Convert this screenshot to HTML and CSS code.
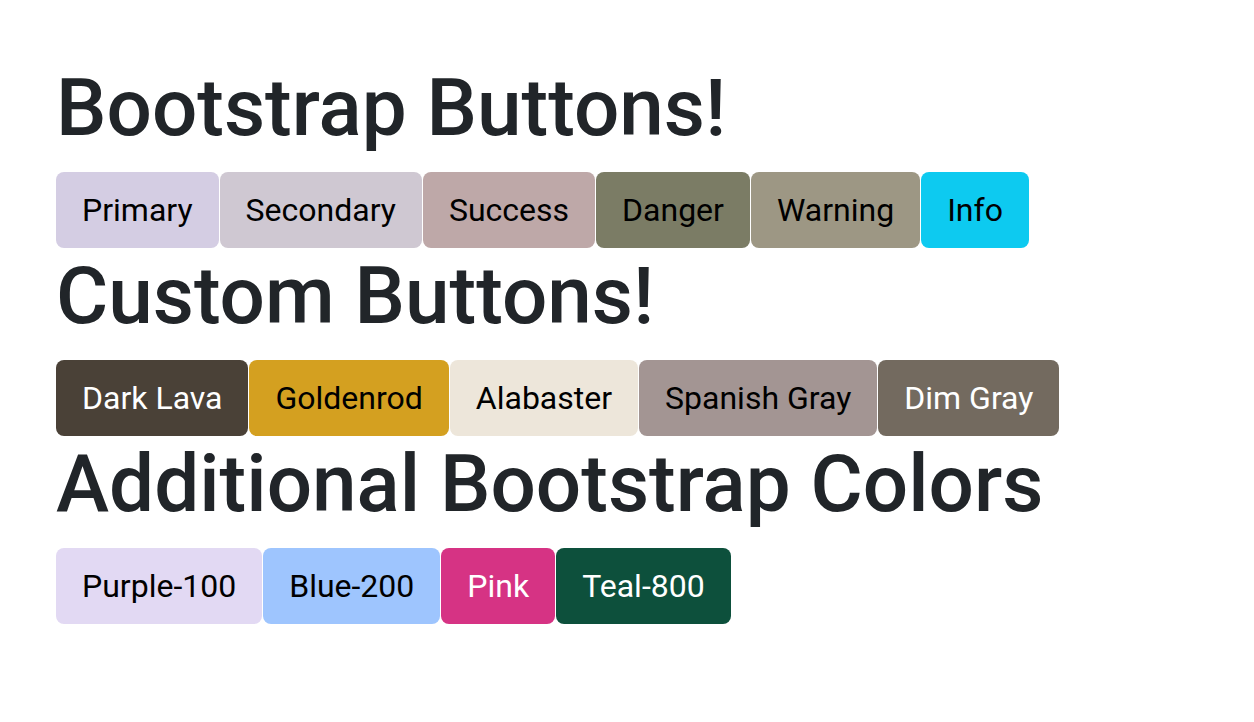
FILE: index.html
```html
<!DOCTYPE html>
<html lang="en">

<head>
    <meta charset="UTF-8">
    <meta name="viewport" content="width=device-width, initial-scale=1.0">
    <title>Bootstrap Buttons</title>
    <link rel="stylesheet" href="styles.css">
</head>

<body>
    <div class="container">
        <h1>Bootstrap Buttons!</h1>
        <div class="btn-row">
            <button type="button" class="btn btn-primary">Primary</button>
            <button type="button" class="btn btn-secondary">Secondary</button>
            <button type="button" class="btn btn-success">Success</button>
            <button type="button" class="btn btn-danger">Danger</button>
            <button type="button" class="btn btn-warning">Warning</button>
            <button type="button" class="btn btn-info">Info</button>
        </div>

        <h1>Custom Buttons!</h1>
        <div class="btn-row">
            <button type="button" class="btn btn-dark-lava">Dark Lava</button>
            <button type="button" class="btn btn-goldenrod">Goldenrod</button>
            <button type="button" class="btn btn-alabaster">Alabaster</button>
            <button type="button" class="btn btn-spanish-gray">Spanish Gray</button>
            <button type="button" class="btn btn-dim-gray">Dim Gray</button>
        </div>

        <h1>Additional Bootstrap Colors</h1>
        <div class="btn-row">
            <button type="button" class="btn btn-purple-100">Purple-100</button>
            <button type="button" class="btn btn-blue-200">Blue-200</button>
            <button type="button" class="btn btn-pink">Pink</button>
            <button type="button" class="btn btn-teal-800">Teal-800</button>
        </div>
    </div>
</body>

</html>
```

FILE: styles.css
```css
body {
    margin: 0;
    font-family: Roboto, "Liberation Sans", Arial, sans-serif;
    background-color: #fff;
    color: #212529;
}

.container {
    padding: 60px 56px;
}

h1 {
    margin: 0 0 16px;
    font-size: 80px;
    font-weight: 500;
    line-height: 1.2;
    color: #212529;
}

.btn-row {
    display: flex;
    gap: 1px;
}

.btn {
    font-family: inherit;
    font-size: 32px;
    font-weight: 400;
    line-height: 48px;
    padding: 12px 24px;
    border: 2px solid transparent;
    border-radius: 8px;
    color: #000;
    cursor: pointer;
}

/* themed bootstrap colours */
.btn-primary { background-color: #d4cde3; }
.btn-secondary { background-color: #cfc8d2; }
.btn-success { background-color: #bea8a8; }
.btn-danger { background-color: #7b7c65; }
.btn-warning { background-color: #9d9784; }
.btn-info { background-color: #0dcaf0; }

/* custom palette */
.btn-dark-lava { background-color: #4a4137; color: #fff; }
.btn-goldenrod { background-color: #d4a020; }
.btn-alabaster { background-color: #ede6da; }
.btn-spanish-gray { background-color: #a39593; }
.btn-dim-gray { background-color: #736a5f; color: #fff; }

/* extra bootstrap colours */
.btn-purple-100 { background-color: #e2d9f3; }
.btn-blue-200 { background-color: #9ec5fe; }
.btn-pink { background-color: #d63384; color: #fff; }
.btn-teal-800 { background-color: #0d503c; color: #fff; }
```
